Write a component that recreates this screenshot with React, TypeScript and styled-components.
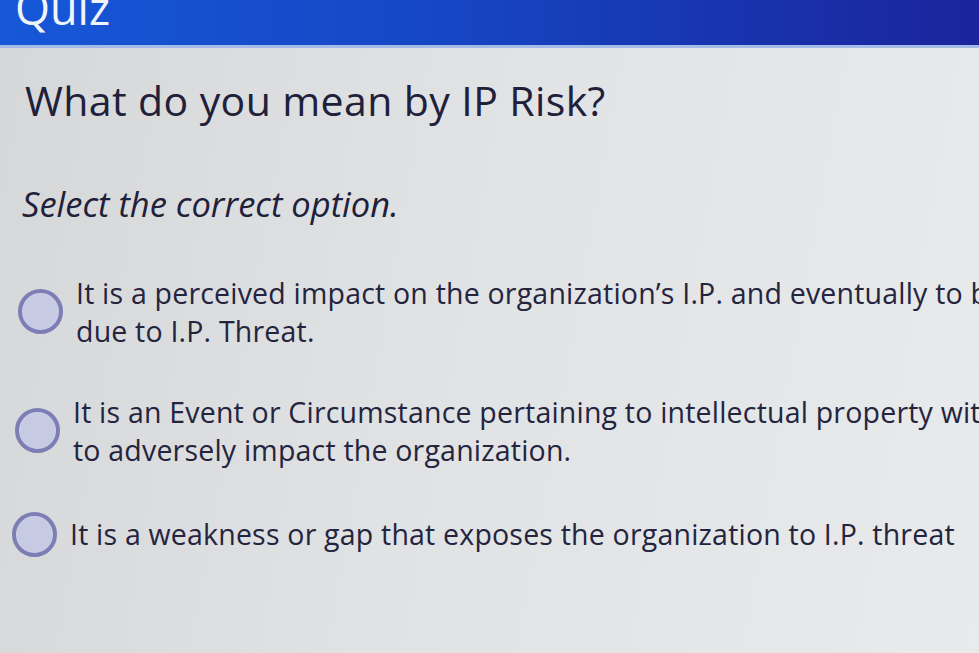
import styled, { createGlobalStyle } from "styled-components"

const GlobalStyle = createGlobalStyle`
  html, body {
    margin: 0;
    padding: 0;
    overflow: hidden;
  }
  body {
    font-family: "Open Sans", "Noto Sans", sans-serif;
    background: #dfe1e3;
  }
`

const options = [
  {
    indent: 18,
    lines: [
      "It is a perceived impact on the organization’s I.P. and eventually to be",
      "due to I.P. Threat.",
    ],
  },
  {
    indent: 15,
    lines: [
      "It is an Event or Circumstance pertaining to intellectual property with potential",
      "to adversely impact the organization.",
    ],
  },
  {
    indent: 12,
    lines: ["It is a weakness or gap that exposes the organization to I.P. threat"],
  },
]

export default function App() {
  return (
    <>
      <GlobalStyle />
      <Page>
        <Header>
          <HeaderTitle>Quiz</HeaderTitle>
        </Header>
        <Content>
          <Question>What do you mean by IP Risk?</Question>
          <Instruction>Select the correct option.</Instruction>
          <OptionList>
            {options.map((opt, i) => (
              <Option key={i} $indent={opt.indent}>
                <Radio />
                <OptionText>
                  {opt.lines.map((line) => (
                    <Line key={line}>{line}</Line>
                  ))}
                </OptionText>
              </Option>
            ))}
          </OptionList>
        </Content>
      </Page>
    </>
  )
}

const Page = styled.div`
  width: 979px;
  height: 653px;
  overflow: hidden;
  background: linear-gradient(100deg, #d5d7d9 0%, #e0e2e4 45%, #e8eaec 100%);
`

const Header = styled.div`
  height: 45px;
  overflow: hidden;
  padding-left: 15px;
  background: linear-gradient(90deg, #1658d8 0%, #1646c4 45%, #1a249c 100%);
  border-bottom: 3px solid #a4bbe8;
`

const HeaderTitle = styled.div`
  margin-top: -15px;
  font-size: 45px;
  line-height: 1;
  color: #f2f4fb;
`

const Content = styled.div`
  padding-top: 28px;
`

const Question = styled.h1`
  margin: 0 0 0 25px;
  font-size: 41px;
  font-weight: 400;
  letter-spacing: 0.4px;
  line-height: 1.2;
  color: #20203a;
`

const Instruction = styled.p`
  margin: 58px 0 0 22px;
  font-size: 34.5px;
  font-style: italic;
  line-height: 1.2;
  color: #20203a;
`

const OptionList = styled.div`
  margin-top: 49px;
  display: flex;
  flex-direction: column;
  gap: 43px;
`

const Option = styled.div<{ $indent: number }>`
  display: flex;
  align-items: center;
  gap: 13px;
  padding-left: ${(p) => p.$indent}px;
`

const Radio = styled.span`
  flex: none;
  width: 37px;
  height: 37px;
  border-radius: 50%;
  border: 4px solid #7d7eb5;
  background: radial-gradient(circle, #c6cae2 62%, #dde0ee 88%);
`

const OptionText = styled.div`
  font-size: 28.5px;
  letter-spacing: 0.2px;
  line-height: 38px;
  color: #24243e;
`

const Line = styled.span`
  display: block;
  white-space: nowrap;
`
